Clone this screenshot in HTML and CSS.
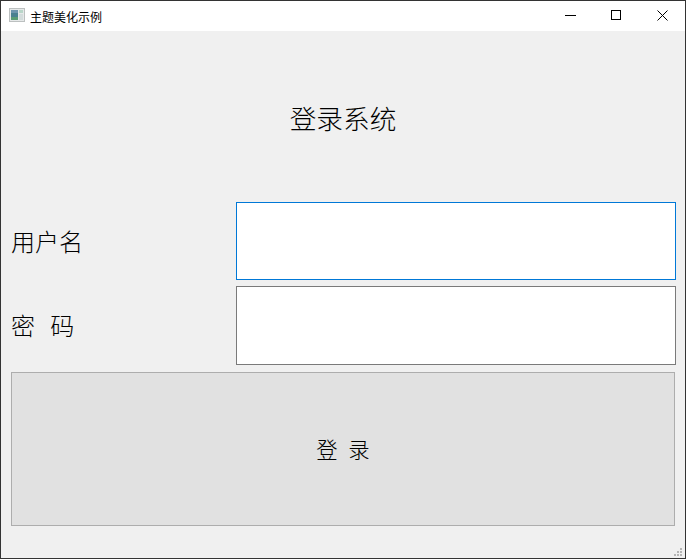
FILE: index.html
```html
<!DOCTYPE html>
<html lang="zh-CN">
<head>
    <meta charset="UTF-8">
    <meta name="viewport" content="width=device-width, initial-scale=1.0">
    <title>主题美化示例</title>
    <link rel="stylesheet" href="styles.css">
</head>
<body>
    <div class="window">
        <!-- Title Bar -->
        <div class="title-bar">
            <svg class="app-icon" width="16" height="16" viewBox="0 0 16 16">
                <rect x="0.5" y="0.5" width="15" height="13" fill="#e6e9e9" stroke="#bcc0c0"/>
                <rect x="2" y="2" width="7" height="10" fill="#4a8090"/>
                <rect x="2" y="2" width="7" height="3" fill="#6d94ad"/>
                <rect x="2" y="9" width="7" height="3" fill="#5a9c74"/>
                <rect x="10" y="2" width="4" height="3" fill="#b9d6c9"/>
                <rect x="10" y="6" width="4" height="6" fill="#d3dcdc"/>
            </svg>
            <span class="title-text">主题美化示例</span>
            <div class="caption-btns">
                <svg class="caption-btn" width="46" height="30" viewBox="0 0 46 30">
                    <path d="M18 14.5H29" stroke="#000" fill="none"/>
                </svg>
                <svg class="caption-btn" width="46" height="30" viewBox="0 0 46 30">
                    <rect x="18.5" y="9.5" width="9" height="9" stroke="#000" fill="none"/>
                </svg>
                <svg class="caption-btn" width="46" height="30" viewBox="0 0 46 30">
                    <path d="M18.5 9.5L28.5 19.5M28.5 9.5L18.5 19.5" stroke="#000" fill="none"/>
                </svg>
            </div>
        </div>

        <!-- Login Form -->
        <div class="content">
            <h1 class="heading">登录系统</h1>
            <div class="form-row">
                <label class="form-label">用户名</label>
                <input class="form-input focused" type="text">
            </div>
            <div class="form-row">
                <label class="form-label wide-space">密 码</label>
                <input class="form-input" type="text">
            </div>
            <button class="login-btn">登 录</button>
        </div>

        <!-- Resize Grip -->
        <svg class="grip" width="9" height="9" viewBox="0 0 9 9" fill="#b5b5b5">
            <rect x="6" y="0" width="2" height="2"/>
            <rect x="3" y="3" width="2" height="2"/>
            <rect x="6" y="3" width="2" height="2"/>
            <rect x="0" y="6" width="2" height="2"/>
            <rect x="3" y="6" width="2" height="2"/>
            <rect x="6" y="6" width="2" height="2"/>
        </svg>
    </div>
</body>
</html>
```

FILE: styles.css
```css
/* Basic Styling */
html, body {
    margin: 0;
    padding: 0;
    height: 100%;
}
body {
    font-family: "Noto Sans CJK SC", "Liberation Sans", sans-serif;
    color: #000;
}
.window {
    box-sizing: border-box;
    position: relative;
    display: flex;
    flex-direction: column;
    width: 686px;
    height: 559px;
    border: 1px solid #333;
    background-color: #f0f0f0;
}
/* Title Bar */
.title-bar {
    display: flex;
    align-items: center;
    height: 30px;
    padding-left: 8px;
    background-color: #fff;
}
.app-icon { margin-right: 5px; }
.title-text { font-size: 12px; }
.caption-btns {
    display: flex;
    margin-left: auto;
}
/* Login Form */
.content {
    display: flex;
    flex-direction: column;
    gap: 7px;
    padding: 0 10px;
}
.heading {
    height: 164px;
    margin: 0;
    padding-top: 8px;
    box-sizing: border-box;
    display: flex;
    align-items: center;
    justify-content: center;
    font-size: 26.67px;
    font-weight: 300;
}
.form-row {
    display: grid;
    grid-template-columns: 225px 440px;
    height: 78px;
}
.form-row + .form-row {
    height: 79px;
    margin-top: -1px;
}
.form-label {
    align-self: center;
    padding-bottom: 2px;
    font-size: 24px;
    font-weight: 300;
}
.wide-space { word-spacing: 10px; }
.form-input {
    box-sizing: border-box;
    height: 100%;
    margin: 0;
    border: 1px solid #7a7a7a;
    background-color: #fff;
    outline: none;
}
.form-input.focused { border-color: #0078d7; }
.login-btn {
    box-sizing: border-box;
    width: 664px;
    height: 154px;
    padding-bottom: 2px;
    border: 1px solid #adadad;
    background-color: #e1e1e1;
    font-family: inherit;
    font-size: 21.33px;
    font-weight: 300;
    word-spacing: 6px;
    color: #000;
}
.grip {
    position: absolute;
    right: 2px;
    bottom: 1px;
}
```
